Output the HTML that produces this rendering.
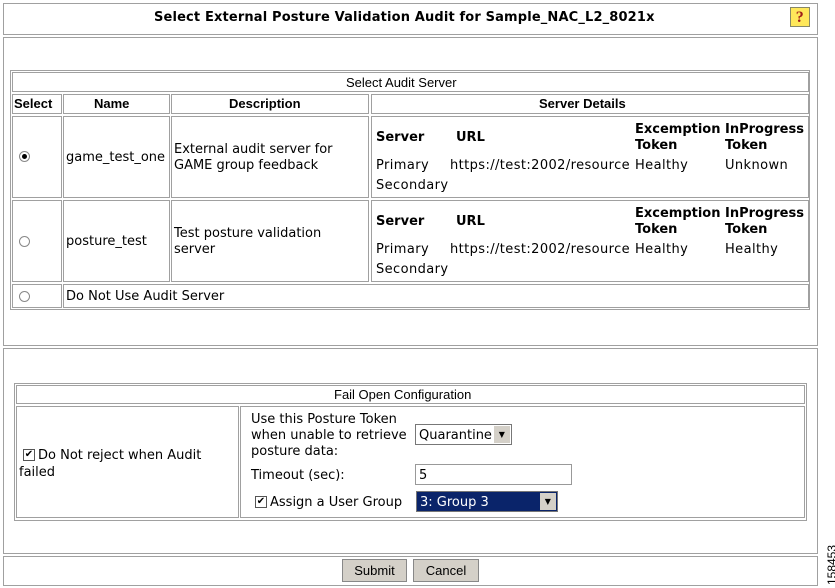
<!DOCTYPE html>
<html><head><meta charset="utf-8"><style>
body{margin:0;width:835px;height:588px;background:#fff;position:relative;overflow:hidden;font-family:"DejaVu Sans","Liberation Sans",sans-serif;font-size:13px;letter-spacing:0.4px;color:#000}
.b{position:absolute;border:1px solid #a0a0a0;box-sizing:border-box;box-shadow:inset 0 0 0 1px #fff}
.t{position:absolute;white-space:nowrap}
.h{font-family:"Liberation Sans",sans-serif;font-size:13px;letter-spacing:0}
.bd{font-weight:bold;letter-spacing:0}
.n{letter-spacing:0}
.radio{position:absolute;width:9px;height:9px;border:1px solid #888;border-radius:50%;background:#fff}
.cb{position:absolute;width:10px;height:10px;border:1px solid #555;background:#fff;font-size:10px;line-height:10px;text-align:center;letter-spacing:0}
.btn{position:absolute;background:#d4d0c8;border:1px solid #888;box-sizing:border-box;text-align:center;font-family:"Liberation Sans",sans-serif;font-size:13px;line-height:21px;letter-spacing:0}
</style></head><body>
<div class="b" style="left:3px;top:3px;width:815px;height:32px"></div>
<div class="t" style="left:154px;top:10px;font-size:13px;font-weight:bold;letter-spacing:0.15px">Select External Posture Validation Audit for Sample_NAC_L2_8021x</div>
<div style="position:absolute;left:790px;top:7px;width:20px;height:20px;background:#ffe85a;border:1px solid #886;box-sizing:border-box;color:#a0201a;font-weight:bold;font-size:16px;text-align:center;line-height:19px;font-family:'Liberation Serif',serif">?</div>

<div class="b" style="left:3px;top:37px;width:815px;height:309px"></div>
<div class="b" style="left:10px;top:70px;width:800px;height:240px"></div>
<div class="b" style="left:12px;top:72px;width:797px;height:20px"></div>
<div class="t h" style="left:346px;top:75px">Select Audit Server</div>
<div class="b" style="left:12px;top:94px;width:50px;height:20px"></div>
<div class="b" style="left:63px;top:94px;width:107px;height:20px"></div>
<div class="b" style="left:171px;top:94px;width:198px;height:20px"></div>
<div class="b" style="left:371px;top:94px;width:438px;height:20px"></div>
<div class="t h bd" style="left:14px;top:96px">Select</div>
<div class="t h bd" style="left:94px;top:96px">Name</div>
<div class="t h bd" style="left:229px;top:96px">Description</div>
<div class="t h bd" style="left:539px;top:96px">Server Details</div>

<div class="b" style="left:12px;top:116px;width:50px;height:82px"></div>
<div class="b" style="left:63px;top:116px;width:107px;height:82px"></div>
<div class="b" style="left:171px;top:116px;width:198px;height:82px"></div>
<div class="b" style="left:371px;top:116px;width:438px;height:82px"></div>
<div class="radio" style="left:19px;top:151px"><div style="position:absolute;left:2px;top:2px;width:5px;height:5px;border-radius:50%;background:#000"></div></div>
<div class="t n" style="left:66px;top:150px">game_test_one</div>
<div class="t n" style="left:174px;top:142px">External audit server for</div>
<div class="t n" style="left:174px;top:158px">GAME group feedback</div>
<div class="t bd" style="left:376px;top:130px">Server</div>
<div class="t bd" style="left:456px;top:130px">URL</div>
<div class="t bd" style="left:635px;top:122px">Excemption</div>
<div class="t bd" style="left:635px;top:138px">Token</div>
<div class="t bd" style="left:725px;top:122px">InProgress</div>
<div class="t bd" style="left:725px;top:138px">Token</div>
<div class="t" style="left:376px;top:158px">Primary</div>
<div class="t" style="left:450px;top:158px">https://test:2002/resource</div>
<div class="t" style="left:635px;top:158px">Healthy</div>
<div class="t" style="left:725px;top:158px">Unknown</div>
<div class="t" style="left:376px;top:178px">Secondary</div>

<div class="b" style="left:12px;top:200px;width:50px;height:82px"></div>
<div class="b" style="left:63px;top:200px;width:107px;height:82px"></div>
<div class="b" style="left:171px;top:200px;width:198px;height:82px"></div>
<div class="b" style="left:371px;top:200px;width:438px;height:82px"></div>
<div class="radio" style="left:19px;top:236px"></div>
<div class="t n" style="left:66px;top:234px">posture_test</div>
<div class="t n" style="left:174px;top:226px">Test posture validation</div>
<div class="t n" style="left:174px;top:242px">server</div>
<div class="t bd" style="left:376px;top:214px">Server</div>
<div class="t bd" style="left:456px;top:214px">URL</div>
<div class="t bd" style="left:635px;top:206px">Excemption</div>
<div class="t bd" style="left:635px;top:222px">Token</div>
<div class="t bd" style="left:725px;top:206px">InProgress</div>
<div class="t bd" style="left:725px;top:222px">Token</div>
<div class="t" style="left:376px;top:242px">Primary</div>
<div class="t" style="left:450px;top:242px">https://test:2002/resource</div>
<div class="t" style="left:635px;top:242px">Healthy</div>
<div class="t" style="left:725px;top:242px">Healthy</div>
<div class="t" style="left:376px;top:262px">Secondary</div>

<div class="b" style="left:12px;top:284px;width:50px;height:24px"></div>
<div class="b" style="left:63px;top:284px;width:746px;height:24px"></div>
<div class="radio" style="left:19px;top:291px"></div>
<div class="t n" style="left:66px;top:289px">Do Not Use Audit Server</div>

<div class="b" style="left:3px;top:348px;width:815px;height:206px"></div>
<div class="b" style="left:14px;top:383px;width:793px;height:138px"></div>
<div class="b" style="left:16px;top:385px;width:789px;height:19px"></div>
<div class="t h" style="left:334px;top:387px">Fail Open Configuration</div>
<div class="b" style="left:16px;top:406px;width:223px;height:112px"></div>
<div class="b" style="left:240px;top:406px;width:565px;height:112px"></div>
<div class="cb" style="left:23px;top:449px">✔</div>
<div class="t n" style="left:38px;top:448px">Do Not reject when Audit</div>
<div class="t n" style="left:19px;top:465px">failed</div>
<div class="t n" style="left:251px;top:412px">Use this Posture Token</div>
<div class="t n" style="left:251px;top:428px">when unable to retrieve</div>
<div class="t n" style="left:251px;top:444px">posture data:</div>
<div style="position:absolute;left:415px;top:424px;width:97px;height:21px;border:1px solid #777;box-sizing:border-box;background:#fff"></div>
<div class="t n" style="left:419px;top:428px">Quarantine</div>
<div style="position:absolute;left:494px;top:426px;width:16px;height:17px;background:#d4d0c8;font-size:8px;text-align:center;line-height:17px">▼</div>
<div class="t n" style="left:251px;top:468px">Timeout (sec):</div>
<div style="position:absolute;left:415px;top:464px;width:157px;height:21px;border:1px solid #999;box-sizing:border-box;background:#fff"></div>
<div class="t" style="left:419px;top:468px">5</div>
<div class="cb" style="left:255px;top:496px">✔</div>
<div class="t n" style="left:270px;top:495px">Assign a User Group</div>
<div style="position:absolute;left:416px;top:491px;width:142px;height:21px;border:1px solid #777;box-sizing:border-box;background:#0a246a"></div>
<div class="t n" style="left:420px;top:495px;color:#fff">3: Group 3</div>
<div style="position:absolute;left:540px;top:493px;width:16px;height:17px;background:#d4d0c8;font-size:8px;text-align:center;line-height:17px">▼</div>

<div class="b" style="left:3px;top:556px;width:815px;height:30px"></div>
<div class="btn" style="left:342px;top:559px;width:65px;height:23px">Submit</div>
<div class="btn" style="left:413px;top:559px;width:66px;height:23px">Cancel</div>
<div class="t" style="left:812px;top:558px;transform:rotate(-90deg);font-family:'Liberation Sans',sans-serif;font-size:12px;letter-spacing:0">158453</div>
</body></html>
